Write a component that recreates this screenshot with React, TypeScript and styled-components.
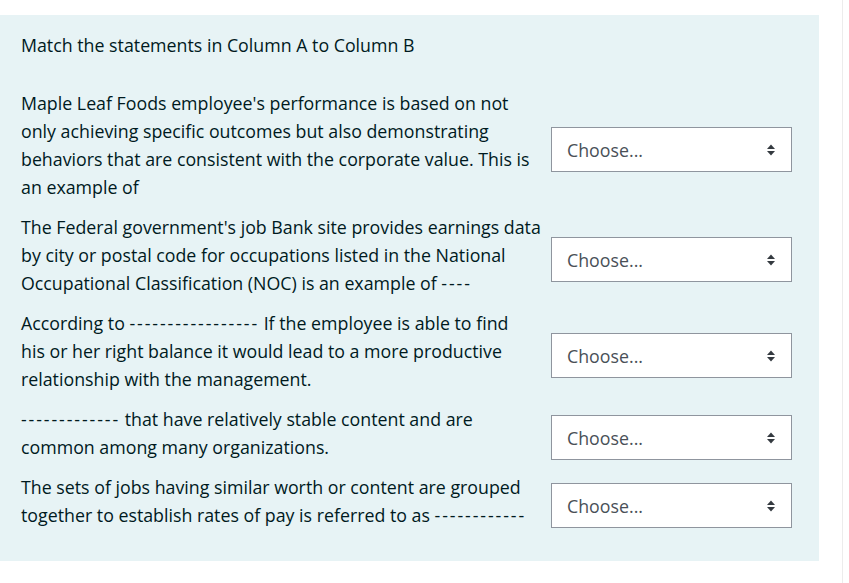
import React, { FC } from 'react';
import styled, { createGlobalStyle } from 'styled-components';

const GlobalStyle = createGlobalStyle`
    html, body {
        margin: 0;
        padding: 0;
        background: #ffffff;
    }
    body {
        font-family: 'Open Sans', 'Noto Sans', sans-serif;
    }
`;

const Page = styled.div`
    width: 843px;
    height: 583px;
    border-right: 1px solid #ececec;
    padding-top: 15px;
    box-sizing: border-box;
`;

const Formulation = styled.div`
    width: 819px;
    background-color: #e7f3f5;
    color: #001a1e;
    padding: 16px 27px 32px 21px;
    box-sizing: border-box;
    font-size: 17.8px;
    line-height: 28px;
`;

const Prompt = styled.div`
    margin-bottom: 30px;
`;

const Rows = styled.div`
    display: flex;
    flex-direction: column;
    gap: 12px;
`;

const Row = styled.div`
    display: grid;
    grid-template-columns: 530px 241px;
    justify-content: space-between;
    align-items: center;
`;

const Statement = styled.div``;

const Line = styled.div`
    white-space: nowrap;
`;

const Dashes = styled.span`
    letter-spacing: 1.9px;
`;

const SelectBox = styled.div`
    margin-top: 9px;
    height: 45px;
    box-sizing: border-box;
    border: 1px solid #8f959e;
    background: #ffffff;
    display: flex;
    align-items: center;
    justify-content: space-between;
    padding: 0 15px 0 15px;
    color: #495057;
    font-size: 17.8px;
`;

const Arrows: FC = () => (
    <svg width="10" height="14" viewBox="0 0 10 14">
        <path d="M1 6 L5 1.5 L9 6 Z" fill="#343a40" />
        <path d="M1 8 L5 12.5 L9 8 Z" fill="#343a40" />
    </svg>
);

// dashes get their own span so they can be widened to the reference's hyphen width
const renderLine = (line: string) =>
    line.split(/(-{2,})/).map((part, i) =>
        /^-{2,}$/.test(part) ? <Dashes key={i}>{part}</Dashes> : <React.Fragment key={i}>{part}</React.Fragment>
    );

const statements: string[][] = [
    [
        "Maple Leaf Foods employee's performance is based on not",
        'only achieving specific outcomes but also demonstrating',
        'behaviors that are consistent with the corporate value. This is',
        'an example of',
    ],
    [
        "The Federal government's job Bank site provides earnings data",
        'by city or postal code for occupations listed in the National',
        'Occupational Classification (NOC) is an example of ----',
    ],
    [
        'According to ----------------- If the employee is able to find',
        'his or her right balance it would lead to a more productive',
        'relationship with the management.',
    ],
    ['------------- that have relatively stable content and are', 'common among many organizations.'],
    [
        'The sets of jobs having similar worth or content are grouped',
        'together to establish rates of pay is referred to as ------------',
    ],
];

const App: FC = () => {
    return (
        <>
            <GlobalStyle />
            <Page>
                <Formulation>
                    <Prompt>Match the statements in Column A to Column B</Prompt>
                    <Rows>
                        {statements.map((lines, index) => (
                            <Row key={index}>
                                <Statement>
                                    {lines.map((line, j) => (
                                        <Line key={j}>{renderLine(line)}</Line>
                                    ))}
                                </Statement>
                                <SelectBox>
                                    <span>Choose...</span>
                                    <Arrows />
                                </SelectBox>
                            </Row>
                        ))}
                    </Rows>
                </Formulation>
            </Page>
        </>
    );
};

export default App;
